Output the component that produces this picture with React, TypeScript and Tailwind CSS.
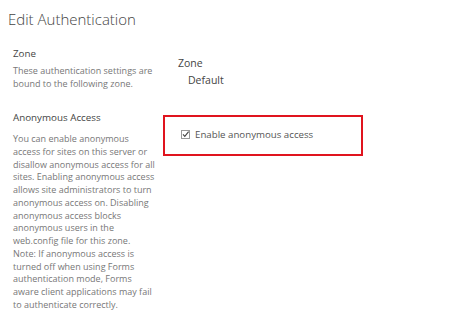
import React from "react";

const anonLines = [
  "You can enable anonymous",
  "access for sites on this server or",
  "disallow anonymous access for all",
  "sites. Enabling anonymous access",
  "allows site administrators to turn",
  "anonymous access on. Disabling",
  "anonymous access blocks",
  "anonymous users in the",
  "web.config file for this zone.",
  "Note: If anonymous access is",
  "turned off when using Forms",
  "authentication mode, Forms",
  "aware client applications may fail",
  "to authenticate correctly.",
];

export default function App() {
  return (
    <div
      className="w-[474px] h-[331px] bg-white overflow-hidden text-[#444]"
      style={{ fontFamily: '"Open Sans", "Noto Sans", sans-serif' }}
    >
      <div className="pl-[8px] pt-[9px] text-[15px] leading-[20px] font-light text-[#444]">
        Edit Authentication
      </div>
      <div className="flex mt-[18px]">
        <div className="w-[150px] ml-[13px] flex flex-col">
          <div className="text-[9.8px] leading-[13px] text-[#444]">Zone</div>
          <div className="mt-[4px] text-[9px] leading-[13px] text-[#777] whitespace-nowrap">
            <div>These authentication settings are</div>
            <div>bound to the following zone.</div>
          </div>
        </div>
        <div className="ml-[15px] pt-[8px] text-[10.5px] leading-[17px] text-[#444]">
          <div>Zone</div>
          <div className="pl-[10px]">Default</div>
        </div>
      </div>
      <div className="flex mt-[21px]">
        <div className="w-[150px] ml-[13px] flex flex-col">
          <div className="text-[9.8px] leading-[13px] text-[#444]">Anonymous Access</div>
          <div className="mt-[9px] text-[9px] leading-[12.75px] text-[#777] whitespace-nowrap">
            {anonLines.map((l) => (
              <div key={l}>{l}</div>
            ))}
          </div>
        </div>
        <div className="self-start mt-[4px] border-2 border-[#e0141e] w-[200px] h-[41px] flex items-center pl-[16px]">
          <div className="flex items-center gap-[5px] text-[9.7px] text-[#555]">
            <svg width="9" height="9" viewBox="0 0 9 9" className="-mt-[2px]">
              <rect x="0.5" y="0.5" width="8" height="8" fill="white" stroke="#999" />
              <path d="M2 4.3 L3.8 6.4 L7.6 1.6" fill="none" stroke="#444" strokeWidth="1.1" />
            </svg>
            <span>Enable anonymous access</span>
          </div>
        </div>
      </div>
    </div>
  );
}
